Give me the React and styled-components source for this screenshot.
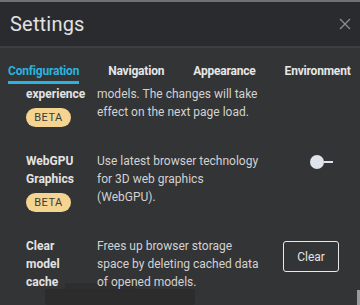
import { useLayoutEffect, useRef } from 'react';
import styled, { createGlobalStyle } from 'styled-components';

const Global = createGlobalStyle`
    html, body {
        margin: 0;
        padding: 0;
        background: #333436;
    }
    body {
        font-family: Roboto, "Noto Sans", sans-serif;
    }
`;

const Panel = styled.div`
    position: relative;
    width: 360px;
    height: 305px;
    background: #333436;
    border-top: 2px solid #6f7175;
    box-sizing: border-box;
    overflow: hidden;
    display: flex;
    flex-direction: column;
`;

const Header = styled.div`
    height: 44px;
    flex: none;
    display: flex;
    align-items: center;
    justify-content: space-between;
    padding: 0 9px 0 10px;
    background: #2a2b2e;
    border-bottom: 2px solid #3d3f43;
`;

const Title = styled.h1`
    margin: 0;
    font-size: 20px;
    font-weight: 400;
    color: #e2e2e2;
    letter-spacing: 0.2px;
`;

const Close = styled.button`
    border: 0;
    background: none;
    padding: 0;
    width: 12px;
    height: 12px;
    display: flex;
    cursor: pointer;
`;

const Tabs = styled.div`
    flex: none;
    display: flex;
    gap: 29px;
    padding: 16px 0 0 8px;
    white-space: nowrap;
`;

const Tab = styled.div`
    font-size: 12px;
    font-weight: 700;
    letter-spacing: -0.2px;
    color: ${(p) => (p.active ? '#2bb3df' : '#e6e6e6')};
    padding-bottom: 2px;
    border-bottom: 3px solid ${(p) => (p.active ? '#2bb3df' : 'transparent')};
    line-height: 15px;
`;

const Scroller = styled.div`
    flex: 1;
    overflow: hidden;
    position: relative;
    z-index: 1;
`;

const List = styled.div`
    display: flex;
    flex-direction: column;
    gap: 25px;
    padding: 12px 21px 40px 26px;
`;

const Row = styled.div`
    display: grid;
    grid-template-columns: 60px 163px 1fr;
    column-gap: 11px;
    align-items: start;
`;

const Label = styled.div`
    font-size: 12px;
    font-weight: 700;
    line-height: 18px;
    color: #e3e3e3;
    display: flex;
    flex-direction: column;
    align-items: flex-start;
`;

const Beta = styled.span`
    margin-top: 5px;
    height: 19px;
    width: 45px;
    border-radius: 10px;
    background: #f5d491;
    color: #3a3a3a;
    font-size: 11px;
    font-weight: 400;
    letter-spacing: 0.5px;
    display: flex;
    align-items: center;
    justify-content: center;
`;

const Desc = styled.div`
    font-size: 12px;
    line-height: 18px;
    color: #d2d2d2;
`;

const Line = styled.span`
    display: block;
    white-space: nowrap;
`;

const Control = styled.div`
    display: flex;
    justify-content: flex-end;
    padding-top: ${(p) => p.top || 0}px;
    padding-right: ${(p) => p.right || 0}px;
`;

const Toggle = styled.div`
    display: flex;
    align-items: center;
    cursor: pointer;
    &::before {
        content: '';
        width: 14px;
        height: 14px;
        border-radius: 50%;
        background: #dfe3ea;
    }
    &::after {
        content: '';
        width: 9px;
        height: 2px;
        background: #dfe3ea;
    }
`;

const Button = styled.button`
    width: 56px;
    height: 31px;
    border: 1px solid #e8e8e8;
    border-radius: 3px;
    background: transparent;
    color: #e3e3e3;
    font-family: inherit;
    font-size: 12px;
    cursor: pointer;
`;

const Ghost = styled.svg`
    position: absolute;
    left: 40px;
    bottom: 0;
    pointer-events: none;
`;

const ScrollThumb = styled.div`
    position: absolute;
    right: 0;
    bottom: 0;
    width: 3px;
    height: 15px;
    background: #9a9a9a;
    z-index: 2;
`;

const rows = [
    {
        label: ['Large', 'model', 'experience'],
        beta: true,
        lines: [
            'Enables an improved',
            'viewing experience for large',
            'models. The changes will take',
            'effect on the next page load.',
        ],
    },
    {
        label: ['WebGPU', 'Graphics'],
        beta: true,
        desc: 'Use latest browser technology for 3D web graphics (WebGPU).',
        control: 'toggle',
    },
    {
        label: ['Clear', 'model', 'cache'],
        desc: 'Frees up browser storage space by deleting cached data of opened models.',
        control: 'button',
    },
];

function App() {
    const scrollRef = useRef(null);
    useLayoutEffect(() => {
        if (scrollRef.current) scrollRef.current.scrollTop = 47;
    }, []);

    return (
        <>
            <Global />
            <Panel>
                <Header>
                    <Title>Settings</Title>
                    <Close aria-label="Close">
                        <svg width="12" height="12" viewBox="0 0 12 12">
                            <path d="M1 1L11 11M11 1L1 11" stroke="#8d8f93" strokeWidth="1.2" />
                        </svg>
                    </Close>
                </Header>
                <Tabs>
                    <Tab active>Configuration</Tab>
                    <Tab>Navigation</Tab>
                    <Tab>Appearance</Tab>
                    <Tab>Environment</Tab>
                </Tabs>
                <Ghost width="160" height="26" viewBox="0 0 160 26">
                    <rect x="5" y="10" width="150" height="16" rx="3" fill="#29292a" opacity="0.7" />
                    <rect x="25" y="4" width="70" height="10" rx="2" fill="#2b2b2c" opacity="0.6" />
                </Ghost>
                <Scroller ref={scrollRef}>
                    <List>
                        {rows.map((row) => (
                            <Row key={row.label.join(' ')}>
                                <Label>
                                    {row.label.map((l) => (
                                        <span key={l}>{l}</span>
                                    ))}
                                    {row.beta && <Beta>BETA</Beta>}
                                </Label>
                                <Desc>
                                    {row.lines ? row.lines.map((l) => <Line key={l}>{l}</Line>) : row.desc}
                                </Desc>
                                {row.control === 'toggle' && (
                                    <Control top={3} right={6}>
                                        <Toggle />
                                    </Control>
                                )}
                                {row.control === 'button' && (
                                    <Control top={4}>
                                        <Button>Clear</Button>
                                    </Control>
                                )}
                            </Row>
                        ))}
                    </List>
                </Scroller>
                <ScrollThumb />
            </Panel>
        </>
    );
}

export default App;
